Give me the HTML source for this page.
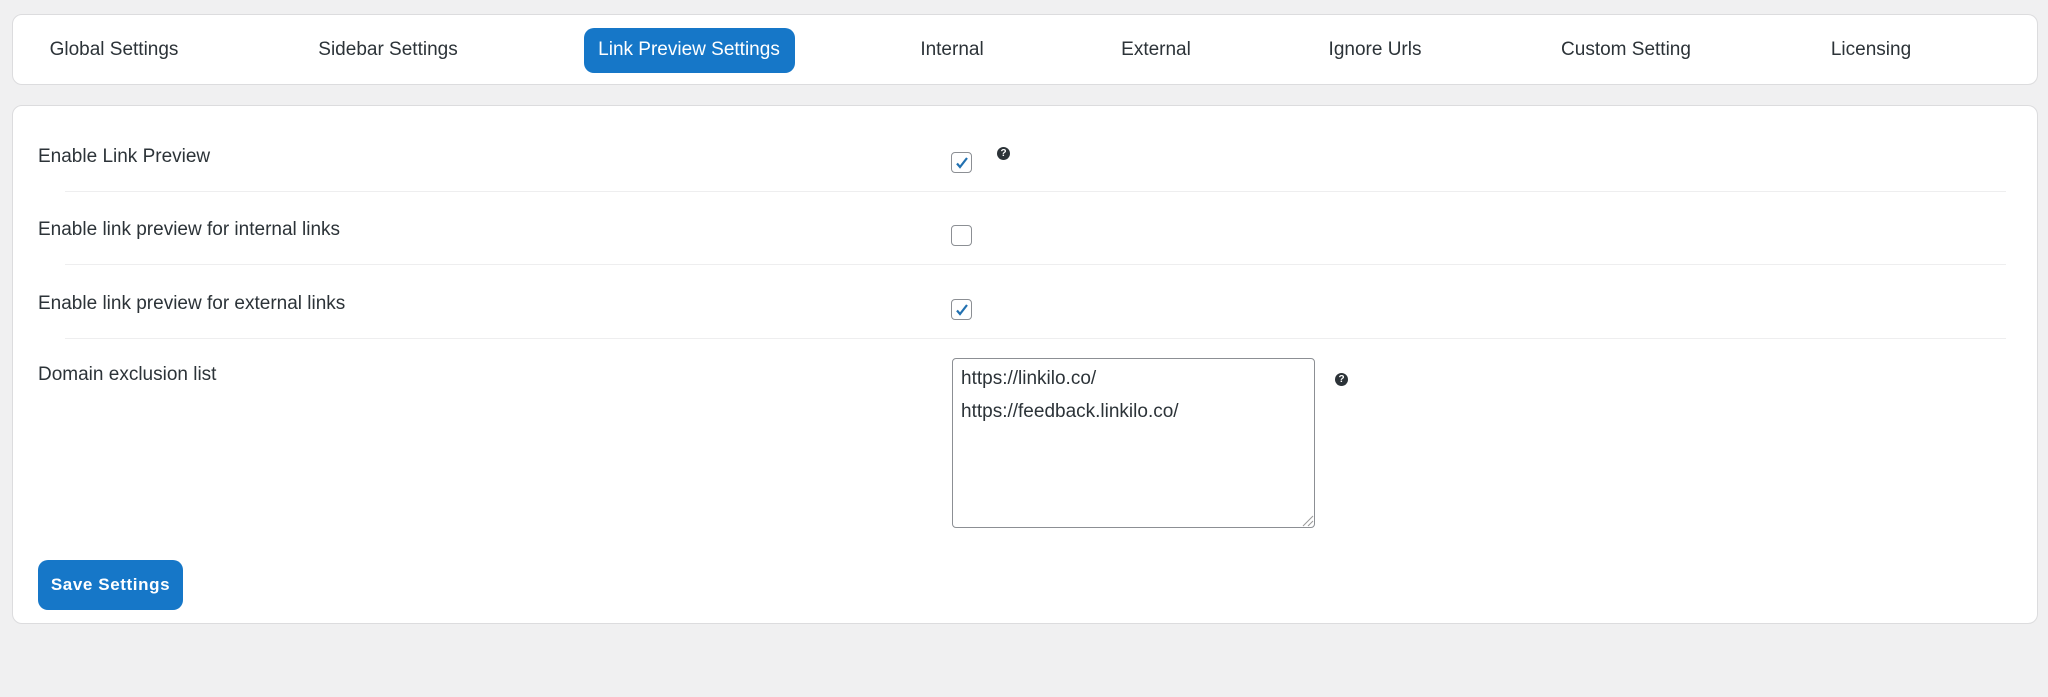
<!DOCTYPE html>
<html><head><meta charset="utf-8"><style>
*{box-sizing:border-box;margin:0;padding:0}
body{width:2048px;height:697px;background:#f0f0f1;font-family:"Liberation Sans",sans-serif;color:#2c3338;position:relative;overflow:hidden}
.card{position:absolute;background:#fff;border:1px solid #dcdcde;border-radius:10px}
.t{position:absolute;font-size:19px;line-height:24px;white-space:nowrap;transform:translateX(-50%)}
.lbl{position:absolute;left:38px;font-size:19px;line-height:24px;white-space:nowrap}
.cb{position:absolute;left:951px;width:21px;height:21px;border:1px solid #8c8f94;border-radius:4px;background:#fff}
.cb svg{position:absolute;left:2px;top:2px}
.sep{position:absolute;left:65px;width:1941px;height:1px;background:#eeeeef}
.help{position:absolute;width:13px;height:13px;border-radius:50%;background:#2c3338;color:#fff;font-size:10px;font-weight:bold;line-height:13px;text-align:center}
</style></head><body>
<div class="card" style="left:12px;top:14px;width:2026px;height:71px"></div>
<div style="position:absolute;left:584px;top:28px;width:211px;height:45px;background:#1677c8;border-radius:10px"></div>
<div class="t" style="left:114px;top:38px">Global Settings</div>
<div class="t" style="left:388px;top:38px">Sidebar Settings</div>
<div class="t" style="left:689px;top:38px;color:#fff">Link Preview Settings</div>
<div class="t" style="left:952px;top:38px">Internal</div>
<div class="t" style="left:1156px;top:38px">External</div>
<div class="t" style="left:1375px;top:38px">Ignore Urls</div>
<div class="t" style="left:1626px;top:38px">Custom Setting</div>
<div class="t" style="left:1871px;top:38px">Licensing</div>

<div class="card" style="left:12px;top:105px;width:2026px;height:519px"></div>
<div class="lbl" style="top:145px">Enable Link Preview</div>
<div class="cb" style="top:152px"><svg width="16" height="16" viewBox="0 0 16 16"><path d="M3 8.5l3 3.5 7-9" fill="none" stroke="#2271b1" stroke-width="2.2"/></svg></div>
<div class="help" style="left:997px;top:147px">?</div>
<div class="sep" style="top:191px"></div>
<div class="lbl" style="top:218px">Enable link preview for internal links</div>
<div class="cb" style="top:225px"></div>
<div class="sep" style="top:264px"></div>
<div class="lbl" style="top:292px">Enable link preview for external links</div>
<div class="cb" style="top:299px"><svg width="16" height="16" viewBox="0 0 16 16"><path d="M3 8.5l3 3.5 7-9" fill="none" stroke="#2271b1" stroke-width="2.2"/></svg></div>
<div class="sep" style="top:338px"></div>
<div class="lbl" style="top:363px">Domain exclusion list</div>
<div style="position:absolute;left:952px;top:358px;width:363px;height:170px;border:1px solid #8c8f94;border-radius:4px;background:#fff;padding:3px 8px;font-size:19px;line-height:33px;white-space:pre">https://linkilo.co/
https://feedback.linkilo.co/</div>
<svg style="position:absolute;left:1302px;top:515px" width="12" height="12" viewBox="0 0 12 12"><path d="M1 11L11 1M6 11L11 6" stroke="#999" stroke-width="1"/></svg>
<div class="help" style="left:1335px;top:373px">?</div>
<div style="position:absolute;left:38px;top:560px;width:145px;height:50px;background:#1677c8;border-radius:10px;color:#fff;font-size:17px;font-weight:bold;line-height:50px;text-align:center;letter-spacing:0.6px">Save Settings</div>
</body></html>
